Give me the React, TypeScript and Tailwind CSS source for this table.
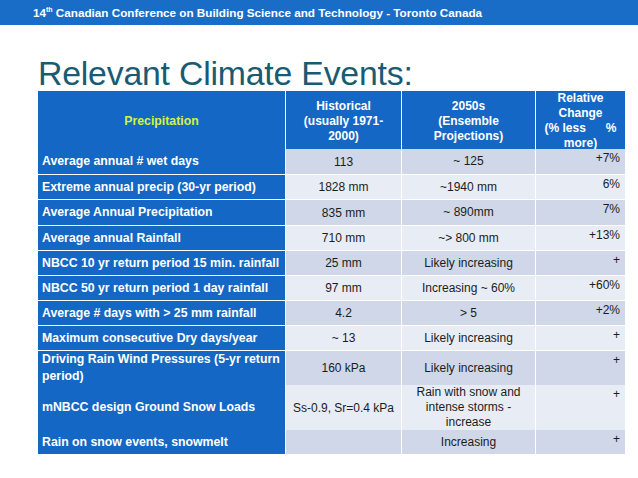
const rows: { label: string; hist: string; proj: React.ReactNode; change: string; h: string }[] = [
  { label: 'Average annual # wet days', hist: '113', proj: '~ 125', change: '+7%', h: 'h-[25px]' },
  { label: 'Extreme annual precip (30-yr period)', hist: '1828 mm', proj: '~1940 mm', change: '6%', h: 'h-[24px]' },
  { label: 'Average Annual Precipitation', hist: '835 mm', proj: '~ 890mm', change: '7%', h: 'h-[25px]' },
  { label: 'Average annual Rainfall', hist: '710 mm', proj: '~> 800 mm', change: '+13%', h: 'h-[24px]' },
  { label: 'NBCC 10 yr return period 15 min. rainfall', hist: '25 mm', proj: 'Likely increasing', change: '+', h: 'h-[24px]' },
  { label: 'NBCC 50 yr return period 1 day rainfall', hist: '97 mm', proj: 'Increasing ~ 60%', change: '+60%', h: 'h-[24px]' },
  { label: 'Average # days with > 25 mm rainfall', hist: '4.2', proj: '> 5', change: '+2%', h: 'h-[24px]' },
  { label: 'Maximum consecutive Dry days/year', hist: '~ 13', proj: 'Likely increasing', change: '+', h: 'h-[24px]' },
  { label: 'Driving Rain Wind Pressures (5-yr return period)', hist: '160 kPa', proj: 'Likely increasing', change: '+', h: 'h-[33px]' },
  {
    label: 'mNBCC design Ground Snow Loads',
    hist: 'Ss-0.9, Sr=0.4 kPa',
    proj: (
      <>
        Rain with snow and
        <br />
        intense storms -
        <br />
        increase
      </>
    ),
    change: '+',
    h: 'h-[44px]',
  },
  { label: 'Rain on snow events, snowmelt', hist: '', proj: 'Increasing', change: '+', h: 'h-[24px]' },
]

export default function App() {
  return (
    <div className="w-[638px] h-[478px] bg-white overflow-hidden font-['Liberation_Sans',Arial,sans-serif]">
      <div className="h-[25px] bg-[#1a6dc6] flex items-center pl-[33px] text-white font-bold text-[11.7px] leading-none">
        <span>
          14<span className="text-[7px] align-top relative -top-[1px]">th</span> Canadian Conference on Building Science and Technology - Toronto Canada
        </span>
      </div>

      <h1 className="mt-[30px] ml-[38px] text-[33.8px] leading-[36px] text-[#185b72] tracking-[-0.2px]">
        Relevant Climate Events:
      </h1>

      <div className="ml-[38px] w-[584px] flex flex-col gap-px bg-white text-[12px]">
        <div className="grid grid-cols-[247px_115px_133px_89px] gap-x-px h-[56px] mb-px font-bold text-white leading-[15px]">
          <div className="bg-[#1467c4] flex items-center justify-center text-[#d5f23e] text-[12.3px]">Precipitation</div>
          <div className="bg-[#1467c4] flex items-center justify-center text-center">
            Historical
            <br />
            (usually 1971-
            <br />
            2000)
          </div>
          <div className="bg-[#1467c4] flex items-center justify-center text-center">
            2050s
            <br />
            (Ensemble
            <br />
            Projections)
          </div>
          <div className="bg-[#1467c4] flex items-center justify-center text-center whitespace-pre overflow-visible">
            {'Relative\nChange\n(% less      %\nmore)'}
          </div>
        </div>

        {rows.map((r, i) => (
          <div key={r.label} className={`grid grid-cols-[247px_115px_133px_89px] gap-x-px ${r.h}`}>
            <div className="bg-[#1467c4] text-white font-bold text-[12.3px] flex items-center pl-[4px] pr-1 leading-[17px]">
              {r.label}
            </div>
            <div className={`${i % 2 === 0 ? 'bg-[#cfd7e9]' : 'bg-[#e8ecf5]'} flex items-center justify-center text-[#1c1c1c]`}>
              {r.hist}
            </div>
            <div
              className={`${i % 2 === 0 ? 'bg-[#cfd7e9]' : 'bg-[#e8ecf5]'} flex items-center justify-center text-center text-[#1c1c1c] leading-[15px]`}
            >
              {r.proj}
            </div>
            <div className={`${i % 2 === 0 ? 'bg-[#cfd7e9]' : 'bg-[#e8ecf5]'} text-right pr-[5px] pt-[2px] text-[#1c1c1c] leading-[14px]`}>
              {r.change}
            </div>
          </div>
        ))}
      </div>
    </div>
  )
}
